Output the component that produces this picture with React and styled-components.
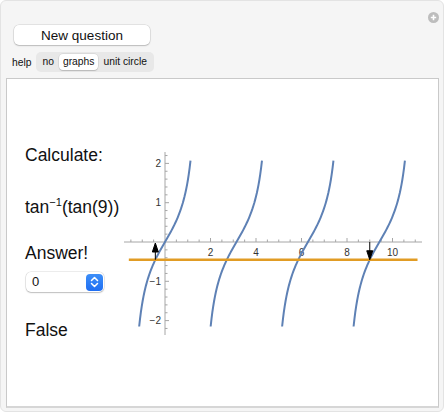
import React from "react";
import styled, { createGlobalStyle } from "styled-components";

const Global = createGlobalStyle`
  html, body { margin: 0; padding: 0; background: #ffffff; }
`;

const Frame = styled.div`
  position: relative;
  width: 444px;
  height: 412px;
  box-sizing: border-box;
  background: #f5f5f5;
  border: 1px solid #e3e3e3;
  border-radius: 6px;
  padding: 24px 0 0 5px;
  font-family: "Liberation Sans", Arial, sans-serif;
  color: #111;
`;

const PlusBadge = styled.div`
  position: absolute;
  top: 8px;
  right: 4px;
  width: 11px;
  height: 11px;
`;

const Controls = styled.div`
  display: flex;
  flex-direction: column;
  align-items: flex-start;
  padding-left: 6px;
`;

const NewButton = styled.button`
  margin-left: 2px;
  width: 136px;
  height: 20px;
  padding: 0;
  border: none;
  border-radius: 5px;
  background: #ffffff;
  box-shadow: 0 0 0 0.5px rgba(0, 0, 0, 0.14), 0 1px 1.5px rgba(0, 0, 0, 0.18);
  font-family: inherit;
  font-size: 13.5px;
  color: #111;
`;

const ToggleRow = styled.div`
  display: flex;
  align-items: center;
  gap: 5px;
  margin-top: 7px;
  font-size: 10.3px;
`;

const Segmented = styled.div`
  display: flex;
  align-items: center;
  height: 20px;
  box-sizing: border-box;
  padding: 2px 2px 2px 1px;
  border-radius: 5px;
  background: #e8e8e8;
`;

const Segment = styled.div`
  height: 16px;
  line-height: 16px;
  padding: 0 ${({ wide }) => (wide ? 5 : 4)}px;
  border-radius: 4px;
  background: ${({ active }) => (active ? "#ffffff" : "transparent")};
  box-shadow: ${({ active }) =>
    active ? "0 0 0 0.5px rgba(0,0,0,0.12), 0 1px 1px rgba(0,0,0,0.15)" : "none"};
`;

const Panel = styled.div`
  display: flex;
  align-items: flex-start;
  margin-top: 6px;
  width: 433px;
  height: 330px;
  box-sizing: border-box;
  background: #ffffff;
  border: 1px solid #c9c9c9;
  border-bottom: 2px solid #d6d6d6;
`;

const Side = styled.div`
  flex: 0 0 113px;
  box-sizing: border-box;
  padding: 66px 0 0 18px;
  white-space: nowrap;
  font-size: 17.5px;
  line-height: 20px;
`;

const Line = styled.div`
  margin-top: ${({ gap }) => gap || 0}px;
  sup {
    font-size: 11px;
    line-height: 0;
    vertical-align: 7px;
  }
`;

const Select = styled.div`
  display: flex;
  align-items: center;
  justify-content: space-between;
  margin: 9px 0 0 1px;
  width: 78px;
  height: 20px;
  box-sizing: border-box;
  padding: 0 1.5px 0 6px;
  border-radius: 5px;
  background: #fff;
  box-shadow: 0 0 0 0.5px rgba(0, 0, 0, 0.14), 0 1px 1.5px rgba(0, 0, 0, 0.2);
  font-size: 13px;
`;

const Stepper = styled.div`
  display: flex;
  align-items: center;
  justify-content: center;
  width: 17px;
  height: 17px;
  border-radius: 4px;
  background: linear-gradient(#3d8ff8, #1f6ef2);
`;

const Plot = styled.svg`
  display: block;
  margin-top: 69px;
  overflow: visible;
  font-family: "Liberation Sans", Arial, sans-serif;
`;

const X0 = 45;
const Y0 = 94;
const UX = 22.75;
const UY = 39.3;
const px = (x) => X0 + x * UX;
const py = (y) => Y0 - y * UY;

function branch(k) {
  const a = Math.atan(-2.15);
  const b = Math.atan(2.07);
  const pts = [];
  const n = 60;
  for (let i = 0; i <= n; i++) {
    const t = a + ((b - a) * i) / n;
    pts.push(`${px(k * Math.PI + t).toFixed(2)},${py(Math.tan(t)).toFixed(2)}`);
  }
  return "M" + pts.join(" L");
}

const T9 = Math.tan(9);
const A1 = 9 - 3 * Math.PI;

function Graph() {
  const xt = [];
  for (let v = -1.5; v <= 11; v += 0.5) {
    if (Math.abs(v) < 0.01) continue;
    const major = Math.abs(v % 2) < 0.01;
    xt.push(
      <line key={"x" + v} x1={px(v)} x2={px(v)} y1={Y0} y2={Y0 - (major ? 4 : 2.5)} />
    );
  }
  const yt = [];
  for (let i = -11; i <= 11; i++) {
    if (i === 0) continue;
    const major = i % 5 === 0;
    yt.push(
      <line key={"y" + i} x1={X0} x2={X0 + (major ? 4 : 2.5)} y1={py(i * 0.2)} y2={py(i * 0.2)} />
    );
  }
  const ay = py(T9);
  const b1 = px(A1);
  const b2 = px(9);
  return (
    <Plot width="306" height="192" viewBox="0 0 306 192">
      <g stroke="#a6a6a6" strokeWidth="1">
        <line x1="4" x2="302" y1={Y0} y2={Y0} />
        <line x1={X0} x2={X0} y1="4" y2="187" />
        {xt}
        {yt}
      </g>
      <g fill="#333" fontSize="10">
        {[2, 4, 6, 8, 10].map((v) => (
          <text key={v} x={px(v)} y={Y0 + 13.5} textAnchor="middle">
            {v}
          </text>
        ))}
        {[2, 1, -1, -2].map((v) => (
          <text key={v} x={X0 - 4} y={py(v) + 3.5} textAnchor="end">
            {v < 0 ? "\u2212" + Math.abs(v) : v}
          </text>
        ))}
      </g>
      <g fill="none" stroke="#5e81b5" strokeWidth="2">
        {[0, 1, 2, 3].map((k) => (
          <path key={k} d={branch(k)} />
        ))}
      </g>
      <line x1={px(-1.59)} x2={px(11.1)} y1={ay} y2={ay} stroke="#e19c24" strokeWidth="2.5" />
      <g stroke="#000" strokeWidth="1" fill="#000">
        <line x1={b1} x2={b1} y1={ay} y2={Y0 + 6} />
        <polygon points={`${b1},${Y0 + 1} ${b1 - 3},${Y0 + 10} ${b1 + 3},${Y0 + 10}`} />
        <line x1={b2} x2={b2} y1={Y0} y2={ay - 6} />
        <polygon points={`${b2},${ay} ${b2 - 3},${ay - 9} ${b2 + 3},${ay - 9}`} />
      </g>
    </Plot>
  );
}

export default function App() {
  return (
    <>
      <Global />
      <Frame>
        <PlusBadge>
          <svg width="11" height="11" viewBox="0 0 11 11">
            <circle cx="5.5" cy="5.5" r="5.5" fill="#bdbdbd" />
            <path d="M5.5 2.8v5.4M2.8 5.5h5.4" stroke="#fff" strokeWidth="1.6" />
          </svg>
        </PlusBadge>
        <Controls>
          <NewButton>New question</NewButton>
          <ToggleRow>
            <span>help</span>
            <Segmented>
              <Segment wide>no</Segment>
              <Segment active>graphs</Segment>
              <Segment wide>unit circle</Segment>
            </Segmented>
          </ToggleRow>
        </Controls>
        <Panel>
          <Side>
            <Line>Calculate:</Line>
            <Line gap={32}>
              tan<sup>−1</sup>(tan(9))
            </Line>
            <Line gap={26}>Answer!</Line>
            <Select>
              <span>0</span>
              <Stepper>
                <svg width="9" height="12" viewBox="0 0 9 12">
                  <path
                    d="M1.5 4.5L4.5 1.5L7.5 4.5M1.5 7.5L4.5 10.5L7.5 7.5"
                    fill="none"
                    stroke="#fff"
                    strokeWidth="1.5"
                    strokeLinecap="round"
                    strokeLinejoin="round"
                  />
                </svg>
              </Stepper>
            </Select>
            <Line gap={28}>False</Line>
          </Side>
          <Graph />
        </Panel>
      </Frame>
    </>
  );
}
